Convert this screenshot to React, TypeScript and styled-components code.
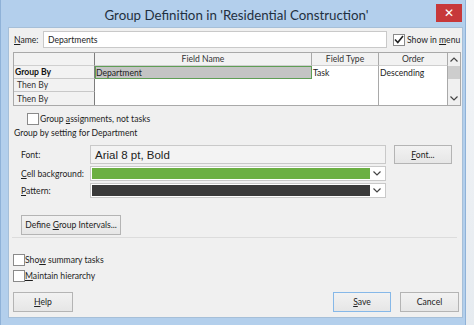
import React from "react";
import styled, { createGlobalStyle } from "styled-components";

const Global = createGlobalStyle`
  html, body { margin: 0; padding: 0; }
  body {
    width: 474px; height: 325px; overflow: hidden;
    background: #dfe7ef;
    font-family: Lato, "Open Sans", sans-serif;
    color: #1e1e1e;
  }
  * { box-sizing: border-box; }
`;

const Screen = styled.div`
  display: flex;
  width: 474px;
  height: 325px;
`;

const Window = styled.div`
  width: 466px;
  height: 325px;
  flex: none;
  background: #b3cfec;
  border-left: 1px solid #8fb2d8;
  border-right: 1px solid #8fb2d8;
  display: flex;
  flex-direction: column;
  padding: 0 2px 7px 7px;
`;

const Backdrop = styled.div`
  flex: 1;
  background: linear-gradient(#f4f6f8, #e6ebf0);
`;

const TitleBar = styled.div`
  height: 27px;
  flex: none;
  display: flex;
  align-items: center;
  position: relative;
`;

const Title = styled.div`
  flex: 1;
  text-align: center;
  font-size: 13.3px;
  color: #1f2f40;
  padding-left: 2px;
  padding-top: 2px;
`;

const Close = styled.div`
  position: absolute;
  right: 1px;
  top: 4px;
  width: 26px;
  height: 18px;
  background: #c7383a;
  color: #fff;
  font-size: 12px;
  font-family: "DejaVu Sans", sans-serif;
  display: flex;
  align-items: center;
  justify-content: center;
`;

const Content = styled.div`
  flex: 1;
  min-height: 0;
  background: #f0f0f0;
  border: 1px solid #a6bfd8;
  display: flex;
  flex-direction: column;
  padding: 3px 3px 0 3px;
  font-size: 8.6px;
`;

const Row = styled.div<{ $h?: number; $mt?: number; $pl?: number; $gap?: number }>`
  display: flex;
  flex: none;
  align-items: center;
  height: ${(p) => p.$h ?? 16}px;
  margin-top: ${(p) => p.$mt ?? 0}px;
  padding-left: ${(p) => p.$pl ?? 0}px;
  gap: ${(p) => p.$gap ?? 0}px;
`;

const Label = styled.span<{ $w?: number }>`
  width: ${(p) => (p.$w ? `${p.$w}px` : "auto")};
  flex: none;
  white-space: nowrap;
`;

const U = styled.span`
  text-decoration: underline;
`;

const TextBox = styled.div<{ $w: number; $h?: number; $bg?: string }>`
  width: ${(p) => p.$w}px;
  height: ${(p) => p.$h ?? 17}px;
  flex: none;
  background: ${(p) => p.$bg ?? "#fff"};
  border: 1px solid #c9c9c9;
  display: flex;
  align-items: center;
  padding-left: 4px;
`;

const BigText = styled.span`
  font-size: 11.5px;
  font-family: "Liberation Sans", Arial, sans-serif;
  color: #222;
`;

const Check = styled.span`
  width: 12px;
  height: 12px;
  border: 1px solid #8a8a8a;
  background: #fff;
  flex: none;
  display: inline-flex;
  align-items: center;
  justify-content: center;
`;

const Grid = styled.div`
  margin-top: 4px;
  margin-left: 1px;
  width: 448px;
  flex: none;
  display: grid;
  grid-template-columns: 81px 217px 67px 69px 12px;
  grid-template-rows: 13px 13px 13px 13px;
  border: 1px solid #a9a9a9;
  background: #fff;
`;

const Head = styled.div<{ $first?: boolean }>`
  background: #f2f2f2;
  border-right: 1px solid ${(p) => (p.$first ? "#7d7d7d" : "#a9a9a9")};
  border-bottom: 1px solid #cfcfcf;
  display: flex;
  align-items: center;
  justify-content: center;
  color: #333;
`;

const RowHead = styled.div<{ $bold?: boolean; $last?: boolean }>`
  background: #f2f2f2;
  border-right: 1px solid #7d7d7d;
  border-bottom: ${(p) => (p.$last ? "none" : "1px solid #c8c8c8")};
  display: flex;
  align-items: center;
  padding-left: ${(p) => (p.$bold ? 1 : 3)}px;
  font-weight: ${(p) => (p.$bold ? 700 : 400)};
  color: ${(p) => (p.$bold ? "#111" : "#333")};
`;

const Cell = styled.div<{ $sel?: boolean; $line?: boolean }>`
  display: flex;
  align-items: center;
  padding-left: 1px;
  color: #222;
  border-right: ${(p) => (p.$line ? "1px solid #a9a9a9" : "none")};
  ${(p) => p.$sel && "background: #c4c4c4; border: 1px solid #5f9e55; padding-left: 0;"}
`;

const Scroll = styled.div`
  grid-column: 5;
  grid-row: 1 / span 4;
  background: #f0f0f0;
  display: flex;
  flex-direction: column;
  align-items: center;
`;

const Arrow = styled.div`
  height: 13px;
  width: 100%;
  display: flex;
  align-items: center;
  justify-content: center;
`;

const Thumb = styled.div`
  width: 100%;
  height: 13px;
  background: #cdcdcd;
`;

const Section = styled.div`
  flex: none;
  height: 14px;
  display: flex;
  align-items: center;
  padding-left: 2px;
  color: #222;
`;

const SettingsBox = styled.div`
  display: flex;
  flex: none;
  flex-direction: column;
  padding-left: 9px;
  margin-right: 2px;
  border-bottom: 1px solid #dcdcdc;
  padding-bottom: 2px;
`;

const Swatch = styled.div<{ $color: string; $dots?: boolean }>`
  width: 296px;
  height: 15px;
  flex: none;
  background: #fff;
  border: 1px solid #c9c9c9;
  display: flex;
  padding: 1px;
  & > div {
    flex: 1;
    background: ${(p) => p.$color};
    ${(p) =>
      p.$dots &&
      "background-image: radial-gradient(#5a5a5a 0.6px, transparent 0.7px); background-size: 2px 2px;"}
  }
  & > span {
    width: 14px;
    display: flex;
    align-items: center;
    justify-content: center;
  }
`;

const Button = styled.div<{ $w: number; $h?: number; $focus?: boolean; $mr?: number }>`
  width: ${(p) => p.$w}px;
  height: ${(p) => p.$h ?? 20}px;
  margin-right: ${(p) => p.$mr ?? 0}px;
  background: linear-gradient(#f2f2f2, #e6e6e6);
  border: 1px solid ${(p) => (p.$focus ? "#86b8e8" : "#b4b4b4")};
  display: flex;
  align-items: center;
  justify-content: center;
  color: #222;
  flex: none;
`;

const Footer = styled.div`
  display: flex;
  flex: none;
  align-items: center;
  margin-top: 9px;
  padding-left: 1px;
  gap: 9px;
`;

const Spacer = styled.div`
  flex: 1;
`;

const Chevron = ({ up }: { up?: boolean }) => (
  <svg width="8" height="5" viewBox="0 0 8 5">
    <path
      d={up ? "M0.5 4.5 L4 1 L7.5 4.5" : "M0.5 0.5 L4 4 L7.5 0.5"}
      fill="none"
      stroke="#444"
      strokeWidth="1.2"
    />
  </svg>
);

export default function App() {
  return (
    <>
      <Global />
      <Screen>
        <Window>
          <TitleBar>
            <Title>Group Definition in 'Residential Construction'</Title>
            <Close>✕</Close>
          </TitleBar>
          <Content>
            <Row $h={17} $pl={2}>
              <Label $w={29}>
                <U>N</U>ame:
              </Label>
              <TextBox $w={344}>Departments</TextBox>
              <Row $pl={6} $gap={2}>
                <Check>
                  <svg width="10" height="9" viewBox="0 0 10 9">
                    <path d="M1 4.5 L3.8 7.5 L9 1" fill="none" stroke="#222" strokeWidth="1.6" />
                  </svg>
                </Check>
                <Label>
                  Show in <U>m</U>enu
                </Label>
              </Row>
            </Row>
            <Grid>
              <Head $first />
              <Head>Field Name</Head>
              <Head>Field Type</Head>
              <Head>Order</Head>
              <Scroll>
                <Arrow>
                  <Chevron up />
                </Arrow>
                <Thumb />
                <Spacer />
                <Arrow>
                  <Chevron />
                </Arrow>
              </Scroll>
              <RowHead $bold>Group By</RowHead>
              <Cell $sel>Department</Cell>
              <Cell $line>Task</Cell>
              <Cell $line>Descending</Cell>
              <RowHead>Then By</RowHead>
              <Cell />
              <Cell $line />
              <Cell $line />
              <RowHead $last>Then By</RowHead>
              <Cell />
              <Cell $line />
              <Cell $line />
            </Grid>
            <Row $h={14} $mt={6} $pl={15} $gap={1}>
              <Check />
              <Label>
                Group <U>a</U>ssignments, not tasks
              </Label>
            </Row>
            <Section>Group by setting for Department</Section>
            <SettingsBox>
              <Row $h={19} $mt={5}>
                <Label $w={69}>Font:</Label>
                <TextBox $w={296} $h={19} $bg="#f3f3f3">
                  <BigText>Arial 8 pt, Bold</BigText>
                </TextBox>
                <Spacer />
                <Button $w={58} $h={19} $mr={5}>
                  <span>
                    <U>F</U>ont...
                  </span>
                </Button>
              </Row>
              <Row $h={15} $mt={2}>
                <Label $w={69}>
                  <U>C</U>ell background:
                </Label>
                <Swatch $color="#6cb043">
                  <div />
                  <span>
                    <Chevron />
                  </span>
                </Swatch>
              </Row>
              <Row $h={15} $mt={2}>
                <Label $w={69}>
                  <U>P</U>attern:
                </Label>
                <Swatch $color="#3a3a3a" $dots>
                  <div />
                  <span>
                    <Chevron />
                  </span>
                </Swatch>
              </Row>
              <Row $h={20} $mt={17}>
                <Button $w={100}>
                  <span>
                    Define <U>G</U>roup Intervals...
                  </span>
                </Button>
              </Row>
            </SettingsBox>
            <Row $h={14} $mt={15} $pl={1}>
              <Check />
              <Label>
                Sho<U>w</U> summary tasks
              </Label>
            </Row>
            <Row $h={14} $mt={2} $pl={1}>
              <Check />
              <Label>
                <U>M</U>aintain hierarchy
              </Label>
            </Row>
            <Footer>
              <Button $w={60}>
                <span>
                  <U>H</U>elp
                </span>
              </Button>
              <Spacer />
              <Button $w={58} $focus>
                <span>
                  <U>S</U>ave
                </span>
              </Button>
              <Button $w={59}>Cancel</Button>
            </Footer>
          </Content>
        </Window>
        <Backdrop />
      </Screen>
    </>
  );
}
